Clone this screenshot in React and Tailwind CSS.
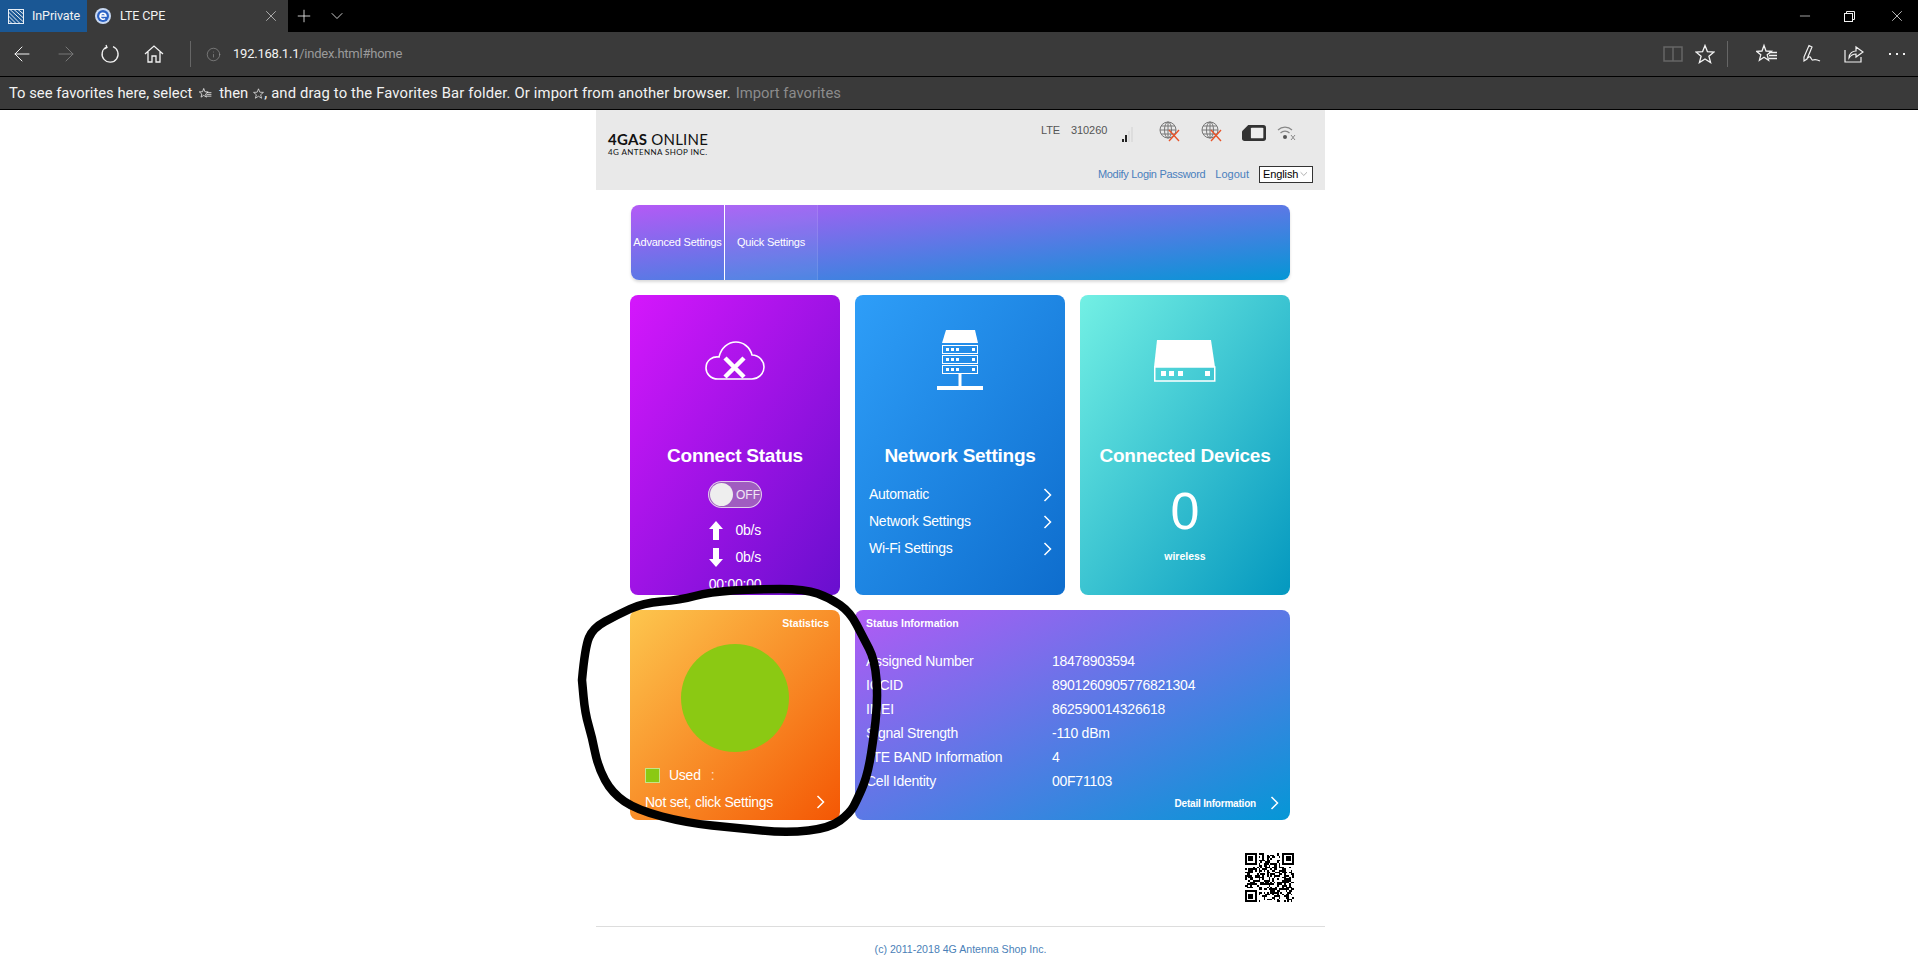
import React from 'react';
import { Minus, Plus, X, ChevronDown, ArrowLeft, ArrowRight, Info } from 'lucide-react';

const arial = "font-['Liberation_Sans',Arial,sans-serif]";

const infoRows = [
  ['Assigned Number', '18478903594'],
  ['ICCID', '8901260905776821304'],
  ['IMEI', '862590014326618'],
  ['Signal Strength', '-110 dBm'],
  ['LTE BAND Information', '4'],
  ['Cell Identity', '00F71103'],
];

// the marker ring someone drew round the statistics card
const ring = [
  [582, 680], [585, 647], [593, 628], [617, 615], [643, 603], [680, 600], [710, 592], [755, 589],
  [805, 589], [830, 598], [850, 612], [863, 637], [875, 660], [878, 700], [873, 743], [867, 777],
  [857, 800], [850, 813], [830, 828], [787, 833], [737, 828], [687, 823], [637, 810], [612, 793],
  [598, 767], [592, 737], [585, 713], [582, 680],
];

function ringPath() {
  let d = `M${ring[0][0]} ${ring[0][1]}`;
  for (let i = 1; i < ring.length - 1; i++) {
    const mx = (ring[i][0] + ring[i + 1][0]) / 2;
    const my = (ring[i][1] + ring[i + 1][1]) / 2;
    d += ` Q${ring[i][0]} ${ring[i][1]} ${mx} ${my}`;
  }
  return d + ` L${ring[ring.length - 1][0]} ${ring[ring.length - 1][1]}`;
}

function Chevron({ className = '' }) {
  return (
    <svg width="9" height="14" viewBox="0 0 9 14" fill="none" className={className}>
      <path d="M1.5 1 L7.5 7 L1.5 13" stroke="white" strokeWidth="1.5" />
    </svg>
  );
}

function Star({ size = 20, stroke = '#f2f2f2' }) {
  return (
    <svg width={size} height={size} viewBox="0 0 20 20" fill="none">
      <path d="M10 1.5 L12.4 7.6 L19 8 L13.9 12.2 L15.6 18.6 L10 15 L4.4 18.6 L6.1 12.2 L1 8 L7.6 7.6 Z" stroke={stroke} strokeWidth="1.3" />
    </svg>
  );
}

function FavList({ size = 22 }) {
  return (
    <svg width={size} height={size} viewBox="0 0 22 20" fill="none" stroke="#f2f2f2" strokeWidth="1.3">
      <path d="M8 1.5 L10 7 L15.5 7.3 L11.2 10.8 L12.6 16.2 L8 13.2 L3.4 16.2 L4.8 10.8 L.5 7.3 L6 7 Z" />
      <path d="M13 8.5 H21 M13 11.5 H21 M13 14.5 H21" />
    </svg>
  );
}

function Globe() {
  return (
    <svg width="24" height="22" viewBox="0 0 24 22" fill="none">
      <g stroke="#777" strokeWidth="1">
        <circle cx="10" cy="9" r="8" />
        <ellipse cx="10" cy="9" rx="3.5" ry="8" />
        <path d="M2 9 H18 M3 5 H17 M3 13 H17 M10 1 V17" />
      </g>
      <path d="M11 9 L21 20 M21 9 L11 20" stroke="#e8542a" strokeWidth="1.4" />
    </svg>
  );
}

function QrCode() {
  const n = 29;
  const cells = [];
  let seed = 73;
  const inFinder = (x, y) => (x < 8 && y < 8) || (x > n - 9 && y < 8) || (x < 8 && y > n - 9);
  for (let y = 0; y < n; y++) {
    for (let x = 0; x < n; x++) {
      seed = (seed * 1103515245 + 12345) & 0x7fffffff;
      if (!inFinder(x, y) && (seed >> 16) % 2 === 0) cells.push(<rect key={`${x}-${y}`} x={x} y={y} width="1" height="1" />);
    }
  }
  const finders = [[0, 0], [n - 7, 0], [0, n - 7]];
  return (
    <svg width="49" height="49" viewBox="0 0 29 29" fill="#000" shapeRendering="crispEdges">
      {cells}
      {finders.map(([x, y]) => (
        <g key={`${x}${y}`}>
          <path d={`M${x} ${y}h7v7h-7z M${x + 1} ${y + 1}v5h5v-5z`} fillRule="evenodd" />
          <rect x={x + 2} y={y + 2} width="3" height="3" />
        </g>
      ))}
    </svg>
  );
}

function BrowserChrome() {
  return (
    <div className="font-['Roboto',sans-serif] text-[#f2f2f2]">
      <div className="flex h-8 items-stretch bg-black text-[12.5px] tracking-[-0.1px]">
        <div className="flex w-[87px] items-center gap-[8px] bg-[#1a5794] pl-2">
          <svg width="16" height="15" viewBox="0 0 16 15" fill="none" stroke="#e8eef5" strokeWidth="1">
            <rect x=".5" y=".5" width="15" height="14" />
            <path d="M2 .5 L15.5 13 M6 .5 L15.5 9 M10 .5 L15.5 5 M.5 3 L12 14.5 M.5 7 L8 14.5 M.5 11 L4 14.5" />
          </svg>
          <span>InPrivate</span>
        </div>
        <div className="flex w-[201px] items-center bg-[#3a3a3a] pl-2 pr-[8px]">
          <svg width="16" height="16" viewBox="0 0 16 16" className="mr-[9px]">
            <circle cx="8" cy="8" r="8" fill="#c9d9f2" />
            <circle cx="8" cy="8" r="6" fill="#2c62c4" />
            <path d="M5 8 H11 A3 3 0 1 0 10 10.5" fill="none" stroke="#fff" strokeWidth="1.6" />
          </svg>
          <span className="flex-1">LTE CPE</span>
          <X size={18} strokeWidth={1} color="#cfcfcf" />
        </div>
        <div className="flex items-center pl-[6px]">
          <Plus size={20} strokeWidth={1} className="mr-[13px]" />
          <ChevronDown size={20} strokeWidth={1} />
        </div>
        <div className="ml-auto flex items-center">
          <Minus size={16} strokeWidth={1} className="mr-[31px]" />
          <svg width="11" height="11" viewBox="0 0 11 11" fill="none" stroke="#f2f2f2" className="mr-[33px]">
            <rect x=".5" y="2.5" width="8" height="8" />
            <path d="M2.5 2.5 V.5 H10.5 V8.5 H8.5" />
          </svg>
          <X size={18} strokeWidth={1} className="mr-[12px]" />
        </div>
      </div>

      <div className="flex h-11 items-center bg-[#3a3a3a]">
        <ArrowLeft size={24} strokeWidth={1} className="ml-[10px]" />
        <ArrowRight size={24} strokeWidth={1} color="#777" className="ml-[20px]" />
        <svg width="20" height="20" viewBox="0 0 20 20" fill="none" stroke="#f2f2f2" strokeWidth="1.3" className="ml-[22px]">
          <path d="M6.5 3 A8 8 0 1 0 13 2.7 M6 1 L7 3.5 L4.5 5" />
        </svg>
        <svg width="20" height="20" viewBox="0 0 20 20" fill="none" stroke="#f2f2f2" strokeWidth="1.3" className="ml-[24px]">
          <path d="M1 10 L10 2 L19 10 M4 8 V18 H8 V12 H12 V18 H16 V8" />
        </svg>
        <div className="ml-[26px] h-[26px] w-px bg-[#666]" />
        <Info size={15} strokeWidth={1} color="#999" className="ml-[15px]" />
        <div className="ml-[12px] text-[13px] tracking-[-0.23px]">
          192.168.1.1<span className="text-[#9a9a9a]">/index.html#home</span>
        </div>
        <div className="ml-auto flex items-center">
          <svg width="20" height="16" viewBox="0 0 20 16" fill="none" stroke="#666" strokeWidth="1.5">
            <path d="M1 1 H10 V15 H1 Z M10 1 H19 V15 H10 Z" />
          </svg>
          <div className="ml-[12px]"><Star size={20} /></div>
          <div className="ml-[12px] h-[26px] w-px bg-[#666]" />
          <div className="ml-[28px]"><FavList /></div>
          <svg width="20" height="20" viewBox="0 0 20 20" fill="none" stroke="#f2f2f2" strokeWidth="1.2" className="ml-[24px]">
            <path d="M2 17 L2 13 L7 1.5 L10 3 L5 15 Z M6 14 C9 10 9 17 11 16 C13 15 14 15 18 17" />
          </svg>
          <svg width="20" height="20" viewBox="0 0 20 20" fill="none" stroke="#f2f2f2" strokeWidth="1.2" className="ml-[22px]">
            <path d="M1 6 V18 H17 V13 M5 14 C5 9 9 7 12 7 V3 L19 8 L12 13 V10 C9 10 7 11 5 14 Z" />
          </svg>
          <div className="ml-[25px] mr-[13px] flex gap-[5px]">
            <span className="h-[2px] w-[2px] bg-[#f2f2f2]" />
            <span className="h-[2px] w-[2px] bg-[#f2f2f2]" />
            <span className="h-[2px] w-[2px] bg-[#f2f2f2]" />
          </div>
        </div>
      </div>

      <div className="flex h-[34px] items-center border-y border-black bg-[#3a3a3a] pl-[9px] text-[14.8px]">
        <span>To see favorites here, select</span>
        <span className="mx-[7px]"><FavList size={13} /></span>
        <span>then</span>
        <span className="ml-[5px]"><Star size={11} /></span>
        <span className="tracking-[0.15px]">, and drag to the Favorites Bar folder. Or import from another browser.</span>
        <span className="ml-[5px] text-[#8c8c8c]">Import favorites</span>
      </div>
    </div>
  );
}

function HeaderBar() {
  return (
    <div className="flex h-20 bg-[#e9e9e9]">
      <div className="w-[445px] pl-[12px] pt-[22px] text-[#111] font-['Lato',sans-serif]">
        <div className="text-[15px] leading-[15px] tracking-[0.25px]"><b className="font-bold">4GAS</b> ONLINE</div>
        <div className="mt-[1px] text-[8px] leading-[9px] tracking-[0.4px]">4G ANTENNA SHOP INC.</div>
      </div>
      <div className="flex-1">
        <div className="flex h-10 items-center text-[11px] tracking-[-0.1px] text-[#555]">
          <span>LTE</span>
          <span className="ml-[11px]">310260</span>
          <div className="ml-[15px] mt-[8px] flex items-end gap-[1px]">
            <span className="h-[3px] w-[2px] bg-[#222]" />
            <span className="h-[7px] w-[2px] bg-[#222]" />
            <span className="h-[11px] w-[2px] bg-[#ddd]" />
            <span className="h-[15px] w-[2px] bg-[#ddd]" />
          </div>
          <div className="ml-[25px] mt-[4px]"><Globe /></div>
          <div className="ml-[18px] mt-[4px]"><Globe /></div>
          <svg width="26" height="16" viewBox="0 0 27 18" className="ml-[17px] mt-[5px]">
            <path d="M7 0 H24 Q27 0 27 3 V15 Q27 18 24 18 H3 Q0 18 0 15 V7 Z" fill="#333" />
            <rect x="10" y="3" width="14" height="12" rx="1" fill="#eee" />
          </svg>
          <svg width="20" height="16" viewBox="0 0 20 16" fill="none" stroke="#888" strokeWidth="1.2" className="ml-[10px] mt-[6px]">
            <path d="M1 5 A10 10 0 0 1 15 5 M3.5 8 A6.5 6.5 0 0 1 12.5 8" />
            <circle cx="8" cy="12" r="2" fill="#555" stroke="none" />
            <path d="M14 10 L18 15 M18 10 L14 15" strokeWidth="1" />
          </svg>
        </div>
        <div className={`mt-3 flex h-6 items-center justify-end pr-3 text-[11px] text-[#4a80bd] ${arial}`}>
          <span className="tracking-[-0.3px]">Modify Login Password</span>
          <span className="ml-[10px]">Logout</span>
          <div className="ml-[10px] flex h-[17px] w-[54px] items-center justify-between border border-[#333] bg-white pl-[3px] pr-[2px] text-[11px] tracking-[-0.1px] text-black">
            English
            <ChevronDown size={12} strokeWidth={1} color="#555" />
          </div>
        </div>
      </div>
    </div>
  );
}

function ConnectCard() {
  return (
    <div className="flex h-[300px] flex-col items-center overflow-hidden rounded-lg bg-[linear-gradient(to_bottom_right,#d517fc,#680fce)] text-white">
      <div className="flex h-[136px] items-center pb-[5px]">
        <svg width="60" height="40" viewBox="0 0 60 40" fill="none">
          <path d="M13 38 C5 38 1 32 1 27 C1 19 8 15 14 16 C16 7 23 1 31 1 C38 1 45 6 47 14 C54 14 59 20 59 26 C59 33 53 38 47 38 Z" stroke="white" strokeWidth="1.6" />
          <path d="M20 17 L39 36 M39 17 L20 36" stroke="white" strokeWidth="4.5" />
        </svg>
      </div>
      <div className="h-[50px] text-[19px] font-bold leading-[50px] tracking-[-0.25px]">Connect Status</div>
      <div className="flex h-[27px] w-[54px] items-center rounded-full border border-white/70 bg-[#a05cc0] pl-[1px] text-[12px] text-white/85">
        <span className="h-[23px] w-[23px] rounded-full bg-[#eeeeee]" />
        <span className="ml-[3px]">OFF</span>
      </div>
      <div className="mt-[9px] flex h-[27px] w-[52px] items-center justify-between text-[14px] tracking-[-0.25px]">
        <svg width="14" height="19" viewBox="0 0 14 19" fill="white"><path d="M7 0 L14 8 H10 V19 H4 V8 H0 Z" /></svg>
        <span>0b/s</span>
      </div>
      <div className="flex h-[27px] w-[52px] items-center justify-between text-[14px] tracking-[-0.25px]">
        <svg width="14" height="19" viewBox="0 0 14 19" fill="white"><path d="M7 19 L14 11 H10 V0 H4 V11 H0 Z" /></svg>
        <span>0b/s</span>
      </div>
      <div className="h-6 text-[14px] leading-[27px] tracking-[-0.25px]">00:00:00</div>
    </div>
  );
}

function NetworkCard() {
  return (
    <div className="flex h-[300px] flex-col rounded-lg bg-[linear-gradient(to_bottom_right,#2e9ef8,#0e6dcd)] text-white">
      <div className="flex h-[136px] items-center justify-center pb-[5px]">
        <svg width="46" height="62" viewBox="0 0 46 62" fill="none">
          <path d="M9 0 H38 L41 13 H5 Z" fill="white" />
          {[15, 25, 35].map(y => (
            <g key={y}>
              <rect x="5.5" y={y + 0.5} width="35" height="8" stroke="white" />
              <rect x="9" y={y + 3} width="3" height="3" fill="white" />
              <rect x="14" y={y + 3} width="3" height="3" fill="white" />
              <rect x="19" y={y + 3} width="3" height="3" fill="white" />
              <rect x="35" y={y + 3} width="3" height="3" fill="white" />
            </g>
          ))}
          <path d="M23 44 V58" stroke="white" strokeWidth="3" />
          <path d="M0 58 H46" stroke="white" strokeWidth="4" />
        </svg>
      </div>
      <div className="h-[50px] text-center text-[19px] font-bold leading-[50px] tracking-[-0.25px]">Network Settings</div>
      <div className="pl-[14px] pr-[13px] text-[14px] tracking-[-0.25px]">
        {['Automatic', 'Network Settings', 'Wi-Fi Settings'].map(label => (
          <div key={label} className="flex h-[27px] items-center justify-between">
            {label}
            <Chevron />
          </div>
        ))}
      </div>
    </div>
  );
}

function DevicesCard() {
  return (
    <div className="flex h-[300px] flex-col items-center rounded-lg bg-[linear-gradient(to_bottom_right,#73f0e4,#0498bf)] text-white">
      <div className="flex h-[136px] items-center pb-[5px]">
        <svg width="62" height="42" viewBox="0 0 62 42" fill="none">
          <path d="M3 0 H57 L61 27 H0 Z" fill="white" />
          <rect x=".75" y="27" width="60" height="14" stroke="white" strokeWidth="1.5" />
          <rect x="7" y="31" width="5" height="5" fill="white" />
          <rect x="15" y="31" width="5" height="5" fill="white" />
          <rect x="24" y="31" width="5" height="5" fill="white" />
          <rect x="51" y="31" width="5" height="5" fill="white" />
        </svg>
      </div>
      <div className="h-[50px] text-[19px] font-bold leading-[50px] tracking-[-0.25px]">Connected Devices</div>
      <div className="h-[60px] text-[52px] leading-[60px]">0</div>
      <div className="mt-[5px] h-5 text-[10.5px] font-bold leading-5">wireless</div>
    </div>
  );
}

function StatisticsCard() {
  return (
    <div className="h-[210px] rounded-lg bg-[linear-gradient(to_bottom_right,#fdc64e,#f45704)] text-white">
      <div className="h-[26px] pr-[11px] text-right text-[10.5px] font-bold leading-[26px]">Statistics</div>
      <div className="mx-auto mt-2 h-[108px] w-[108px] rounded-full bg-[#8bc913]" />
      <div className="mt-[11px] flex h-6 items-center pl-[15px] text-[14px] tracking-[-0.25px]">
        <span className="h-[15px] w-[15px] border border-white/50 bg-[#8bc913]" />
        <span className="ml-[9px]">Used</span>
        <span className="ml-[10px] opacity-70">:</span>
      </div>
      <div className="mt-[3px] flex h-6 items-center justify-between pl-[15px] pr-[15px] text-[14px] tracking-[-0.25px]">
        Not set, click Settings
        <Chevron />
      </div>
    </div>
  );
}

function StatusCard() {
  return (
    <div className="h-[210px] rounded-lg bg-[linear-gradient(to_bottom_right,#b25af5,#0597d6)] pl-[11px] pr-[11px] text-white">
      <div className="h-[26px] text-[10.5px] font-bold leading-[26px]">Status Information</div>
      <div className="mt-[13px] text-[14px] tracking-[-0.25px]">
        {infoRows.map(([label, value]) => (
          <div key={label} className="grid h-6 grid-cols-[186px_1fr] items-center">
            <span>{label}</span>
            <span>{value}</span>
          </div>
        ))}
      </div>
      <div className="flex h-5 items-center justify-end text-[10px] font-bold tracking-[-0.2px]">
        Detail Information
        <Chevron className="ml-[14px]" />
      </div>
    </div>
  );
}

export default function App() {
  return (
    <div className={`relative h-[964px] w-[1918px] overflow-hidden bg-white ${arial}`}>
      <BrowserChrome />

      <div className="ml-[596px] w-[729px]">
        <HeaderBar />

        <div className="pl-[34px] pr-[35px]">
          <div className="mt-[15px] ml-px flex h-[75px] items-stretch overflow-hidden rounded-lg bg-[linear-gradient(to_bottom_right,#b45af6,#0596d5)] text-[11px] tracking-[-0.2px] text-white shadow-[0_2px_3px_rgba(0,0,0,0.15)]">
            <div className="flex w-[94px] items-center justify-center border-r border-white">Advanced Settings</div>
            <div className="flex w-[93px] items-center justify-center border-r border-white/10 bg-white/5">Quick Settings</div>
          </div>

          <div className="mt-[15px] grid grid-cols-[210px_210px_210px] gap-[15px]">
            <ConnectCard />
            <NetworkCard />
            <DevicesCard />
          </div>

          <div className="mt-[15px] grid grid-cols-[210px_435px] gap-[15px]">
            <StatisticsCard />
            <StatusCard />
          </div>

          <div className="mt-[33px] -mr-1 flex justify-end">
            <QrCode />
          </div>
        </div>

        <div className="mt-[24px] border-t border-[#dddddd] pt-[13px] text-center text-[10.6px] leading-[18px] text-[#4a7fb8]">
          (c) 2011-2018 4G Antenna Shop Inc.
        </div>
      </div>

      <svg className="pointer-events-none absolute left-0 top-0" width="1918" height="964" fill="none">
        <path d={ringPath()} stroke="#000" strokeWidth="8.5" strokeLinecap="round" strokeLinejoin="round" />
      </svg>
    </div>
  );
}
